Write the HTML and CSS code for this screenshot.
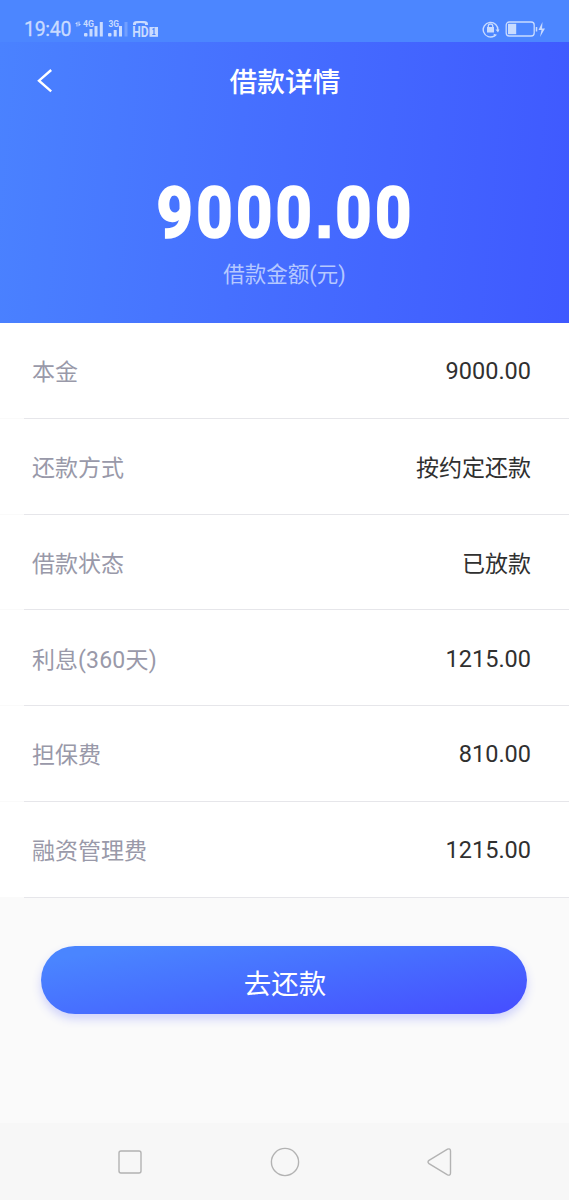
FILE: index.html
```html
<!DOCTYPE html>
<html lang="zh-CN">
<head>
<meta charset="utf-8">
<title>借款详情</title>
<link rel="stylesheet" href="styles.css">
</head>
<body>
<div class="screen">
  <div class="status">
    <span class="time">19:40</span>
    <svg class="signals" width="86" height="20" viewBox="0 0 86 20" fill="currentColor">
      <path d="M0 4l2.500-2.500v5h-1V4zM3.500 1.500h1V4H6L3.500 6.500z"/>
      <text x="8" y="7.300" class="net" textLength="11" lengthAdjust="spacingAndGlyphs">4G</text>
      <rect x="9" y="13" width="3.500" height="3.500" rx="1"/>
      <rect x="14.500" y="9" width="3" height="7.500"/>
      <rect x="19.500" y="6" width="3" height="10.500"/>
      <rect x="24.800" y="2" width="3" height="14.500"/>
      <text x="33.500" y="7" class="net" textLength="10.500" lengthAdjust="spacingAndGlyphs">3G</text>
      <rect x="33" y="13" width="3.500" height="3.500" rx="1"/>
      <rect x="38.700" y="10" width="3" height="6.500"/>
      <rect x="44" y="6" width="3" height="10.500"/>
      <rect x="49.500" y="2" width="3" height="14.500" opacity=".3"/>
      <path d="M58 5V4q0-3 4-3h7q4 0 4 3v1h-3V3.500q-4.500-1-9 0V5z"/>
      <text x="57.200" y="16.600" class="hd" textLength="16.500" lengthAdjust="spacingAndGlyphs">HD</text>
      <rect x="74.500" y="7" width="8.500" height="9.800"/>
      <path class="sim" d="M77.500 9.500l1.500-1v5.500M77.300 14.500h3.200"/>
    </svg>
    <svg class="power" width="65" height="20" viewBox="0 0 65 20" fill="none" stroke="currentColor">
      <path d="M12.500 15.800A7.300 7.300 0 1 1 15.800 10.500" stroke-width="1.400"/>
      <path d="M13.500 9.500h4l-1.500 3zM11.500 13.800l3.500 1-2.500 2.200z" fill="currentColor" stroke="none"/>
      <rect x="5" y="7" width="7" height="5.500" fill="currentColor" stroke="none"/>
      <path d="M6.300 7.500V6q0-2 2.200-2t2.200 2v1.500" stroke-width="1.300"/>
      <rect x="24.200" y="2" width="28" height="14" rx="3" stroke-width="1.300"/>
      <rect x="26" y="3.800" width="8.200" height="10.400" fill="currentColor" stroke="none"/>
      <path d="M54.500 7v4.500" stroke-width="1.500"/>
      <path d="M60.500 2l-4 8h3l-1.500 7 5-8.500h-3z" fill="currentColor" stroke="none"/>
    </svg>
  </div>
  <header class="hero">
    <div class="titlebar">
      <svg class="back" width="18" height="26" viewBox="0 0 18 26" fill="none" stroke="#fff" stroke-width="2.400"><path d="M15.200 2L3 12.700l12.200 10.600"/></svg>
      <h1 class="title">借款详情</h1>
    </div>
    <div class="amount">9000<span class="point">.</span>00</div>
    <div class="caption">借款金额(元)</div>
  </header>
  <main class="list">
    <div class="row"><span class="label">本金</span><span class="value num">9000.00</span></div>
    <div class="row"><span class="label">还款方式</span><span class="value">按约定还款</span></div>
    <div class="row"><span class="label">借款状态</span><span class="value">已放款</span></div>
    <div class="row"><span class="label">利息<span class="term">(360天)</span></span><span class="value num">1215.00</span></div>
    <div class="row"><span class="label">担保费</span><span class="value num">810.00</span></div>
    <div class="row"><span class="label">融资管理费</span><span class="value num">1215.00</span></div>
  </main>
  <div class="action"><button class="pay">去还款</button></div>
  <nav class="navbar">
    <svg width="30" height="30" viewBox="0 0 30 30"><rect x="4" y="4" width="22" height="22" rx="2"/></svg>
    <svg width="30" height="30" viewBox="0 0 30 30"><circle cx="15" cy="15" r="13.600"/></svg>
    <svg width="30" height="30" viewBox="0 0 30 30"><path d="M4 13.400L22.500 2.200Q25.500 1 25.500 4v22q0 3-3 1.800L4 16.600q-2-1.600 0-3.200z"/></svg>
  </nav>
</div>
</body>
</html>
```

FILE: styles.css
```css
* { box-sizing: border-box; }
body {
  margin: 0;
  font-family: Roboto, "Noto Sans CJK SC", sans-serif;
  background: #fafafa;
}
.screen {
  width: 569px;
  height: 1200px;
  display: flex;
  flex-direction: column;
  overflow: hidden;
}
.status {
  height: 42px;
  flex: none;
  display: flex;
  align-items: flex-start;
  padding: 20px 22px 0 24px;
  background: #4c86ff;
  color: #c9dbff;
}
.time {
  width: 51px;
  font-size: 19.5px;
  line-height: 20px;
  letter-spacing: -0.3px;
  -webkit-text-stroke: 0.3px;
}
.power { margin-left: auto; }
.net { font: 700 8.5px Roboto, sans-serif; }
.hd { font: 700 14px Roboto, sans-serif; }
.sim { fill: none; stroke: #4c86ff; stroke-width: 1.2; }
.hero {
  height: 281px;
  flex: none;
  background: linear-gradient(95deg, #4a82ff 0%, #4670ff 42%, #3f59ff 100%);
  color: #fff;
  text-align: center;
}
.titlebar {
  height: 78px;
  display: grid;
  grid-template-columns: 100px 1fr 100px;
  align-items: center;
}
.back { margin-left: 36px; }
.title {
  margin: 0;
  padding: 3px 0 0 1px;
  font-size: 27.7px;
  font-weight: 500;
  line-height: 40px;
}
.amount {
  margin-top: 52px;
  height: 84px;
  padding-left: 3px;
  font-size: 69.5px;
  line-height: 84px;
  font-weight: 700;
  letter-spacing: 4.2px;
  transform: scaleX(.9);
  -webkit-text-stroke: 2.4px #fff;
}
.point {
  font-family: "Liberation Sans", sans-serif;
  line-height: 1;
  letter-spacing: 2.9px;
}
.caption {
  margin-top: 3px;
  font-size: 21.5px;
  line-height: 32px;
  color: #b5c8ff;
}
.list { flex: none; background: #fff; }
.row {
  height: 95.75px;
  display: flex;
  align-items: center;
  justify-content: space-between;
  padding: 0 38px 1px 32px;
  font-size: 23px;
  background: linear-gradient(90deg, #fafafa 24px, #e6e6ea 24px) bottom / 100% 1px no-repeat;
}
.label { color: #9999a9; }
.value { color: #303030; }
.num { padding-top: 2px; font-size: 23.5px; }
.term { letter-spacing: 0.2px; }
.action { flex: 1; padding: 48px 41px 0; }
.pay {
  display: block;
  width: 486px;
  height: 68px;
  padding: 5px 0 0 2px;
  border: 0;
  border-radius: 34px;
  background: linear-gradient(170deg, #4a85ff 10%, #4770ff 45%, #4650ff 95%);
  box-shadow: 0 5px 10px rgba(70, 85, 255, .24);
  color: #fff;
  font: 400 27.5px "Noto Sans CJK SC", sans-serif;
  line-height: 40px;
}
.navbar {
  height: 77px;
  flex: none;
  display: flex;
  justify-content: space-between;
  padding: 24px 114.5px 0 114.5px;
  background: #f7f7f7;
}
.navbar svg { fill: none; stroke: #b3b3b3; stroke-width: 1.4; }
```
